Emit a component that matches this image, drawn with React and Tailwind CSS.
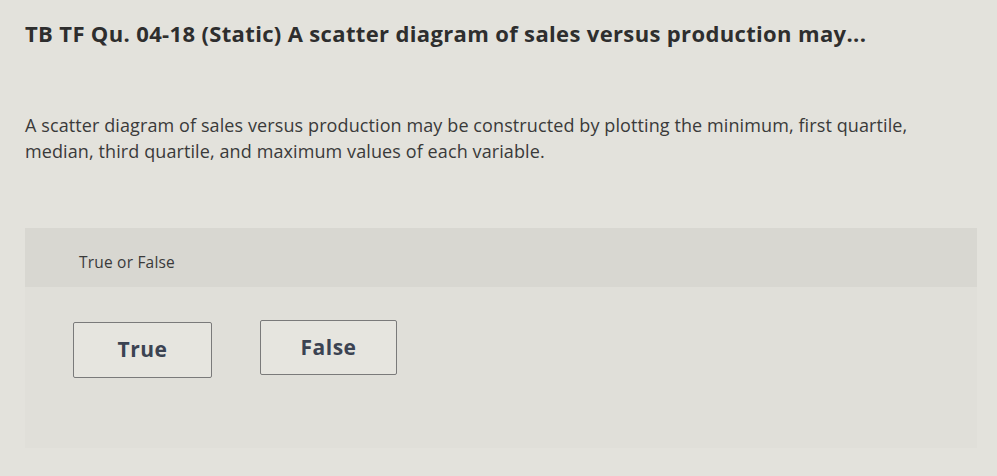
import React from 'react';

export default function App() {
  return (
    <div className="w-[997px] h-[476px] overflow-hidden bg-[#e3e2dc] text-[#333333]" style={{ fontFamily: '"Open Sans", Lato, sans-serif' }}>
      <div className="pt-[19px] pl-[25px] pr-[20px]">
        <h1 className="text-[22px] leading-[28px] font-bold text-[#2e2e2e] tracking-[0.35px] whitespace-nowrap">
          TB TF Qu. 04-18 (Static) A scatter diagram of sales versus production may...
        </h1>
        <p className="mt-[65px] text-[18px] leading-[26px] text-[#3a3a3a] tracking-[0.1px] whitespace-nowrap">
          A scatter diagram of sales versus production may be constructed by plotting the minimum, first quartile,
          <br />
          median, third quartile, and maximum values of each variable.
        </p>
        <div className="mt-[64px] w-[952px] h-[220px] bg-[#e0dfd9] flex flex-col">
          <div className="h-[59px] bg-[#d8d7d1] flex items-center pt-[10px] pl-[54px] text-[15.5px] text-[#3a3a3a] tracking-[0.2px]">
            True or False
          </div>
          <div className="flex items-start gap-[48px] pl-[48px] pt-[34px]">
            <button className="w-[139px] h-[56px] border-[1.5px] border-[#7a7a7a] rounded-[2px] bg-[#e6e5df] text-[21px] font-bold text-[#3b4352] tracking-[0.5px] mt-[1px]">
              True
            </button>
            <button className="w-[137px] h-[55px] border-[1.5px] border-[#7a7a7a] rounded-[2px] bg-[#e6e5df] text-[21px] font-bold text-[#3b4352] tracking-[0.5px] -mt-[1px]">
              False
            </button>
          </div>
        </div>
      </div>
    </div>
  );
}
